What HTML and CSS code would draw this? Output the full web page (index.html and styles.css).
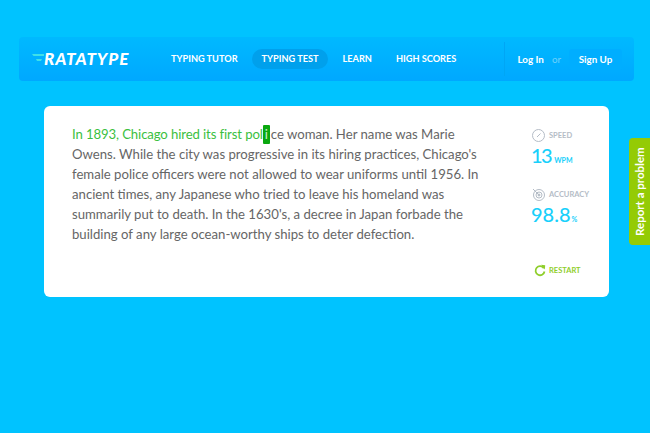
FILE: index.html
```html
<!DOCTYPE html>
<html lang="en">
<head>
<meta charset="utf-8">
<title>Ratatype typing test</title>
<link rel="stylesheet" href="styles.css">
</head>
<body>
<header class="nav">
  <a class="logo">
    <svg class="logo-lines" width="12" height="8" viewBox="0 0 12 8"><path d="M0 0h12v2H1.500zM4 5h6L9 7H5z" fill="#3fe0e8"/></svg>
    <span>RATATYPE</span>
  </a>
  <nav class="menu">
    <a class="item">TYPING TUTOR</a>
    <a class="item active">TYPING TEST</a>
    <a class="item">LEARN</a>
    <a class="item">HIGH SCORES</a>
  </nav>
  <div class="auth">
    <a class="login">Log In</a>
    <span class="or">or</span>
    <a class="signup">Sign Up</a>
  </div>
</header>
<main class="card">
  <div class="text">
    <div class="line"><span class="done">In 1893, Chicago hired its first pol</span><span class="cursor">i</span><span class="next">ce woman. Her name was Marie</span></div>
    <div>Owens. While the city was progressive in its hiring practices, Chicago's female police officers were not allowed to wear uniforms until 1956. In ancient times, any Japanese who tried to leave his homeland was summarily put to death. In the 1630's, a decree in Japan forbade the building of any large ocean-worthy ships to deter defection.</div>
  </div>
  <aside class="stats">
    <div class="stat">
      <div class="stat-label">
        <svg width="13" height="13" viewBox="0 0 13 13" fill="none" stroke="#b4bcc6"><circle cx="6.500" cy="6.500" r="6"/><path d="M5 8l3.500-3.500" /></svg>
        <span>SPEED</span>
      </div>
      <div class="stat-value"><span class="tight">13</span><small>WPM</small></div>
    </div>
    <div class="stat">
      <div class="stat-label">
        <svg width="13" height="13" viewBox="0 0 13 13" fill="none" stroke="#b4bcc6"><circle cx="7" cy="7" r="5.500"/><circle cx="7" cy="7" r="3"/><circle cx="7" cy="7" r="1" fill="#b4bcc6"/><path d="M1 1l6 6" /></svg>
        <span>ACCURACY</span>
      </div>
      <div class="stat-value">98.8<small class="pct">%</small></div>
    </div>
    <a class="restart">
      <svg width="12" height="13" viewBox="0 0 12 13" fill="none"><path d="M9.800 4.200A4.500 4.500 0 1 0 10.500 7.500" stroke="#8fce2b" stroke-width="1.800"/><path d="M7 .8l4.200.4-.3 4.300z" fill="#8fce2b"/></svg>
      <span>RESTART</span>
    </a>
  </aside>
</main>
<a class="report">Report a problem</a>
</body>
</html>
```
FILE: styles.css
```css
* { box-sizing: border-box; }
html, body { height: 100%; }
body {
  margin: 0;
  padding: 37px 16px 0 19px;
  background: #00c3ff;
  font-family: Lato, "Liberation Sans", sans-serif;
  overflow: hidden;
  position: relative;
}
.nav {
  height: 44px;
  border-radius: 4px;
  background: linear-gradient(#00b9ff, #00a8ff);
  display: flex;
  align-items: center;
  color: #fff;
  font-weight: 700;
}
.logo {
  display: flex;
  align-items: center;
  margin-left: 13px;
  width: 129px;
  flex: none;
}
.logo span {
  font-size: 17px;
  line-height: 18px;
  font-weight: 900;
  font-style: italic;
  letter-spacing: .9px;
  margin-top: -1px;
}
.logo-lines { margin-top: -3px; }
.menu {
  display: flex;
  align-items: center;
}
.item {
  font-size: 9.200px;
  line-height: 20px;
  padding: 0 10px;
  border-radius: 10px;
  margin-right: 4px;
  white-space: nowrap;
}
.item.active { background: #00a0ec; }
.auth {
  margin-left: auto;
  height: 34px;
  display: flex;
  align-items: center;
  padding-left: 13px;
  border-left: 1px solid #00a6f5;
  font-size: 9.800px;
}
.or { color: #6fd0fb; font-weight: 400; margin: 0 8px; }
.login { white-space: nowrap; }
.signup {
  display: block;
  width: 53px;
  line-height: 21px;
  text-align: center;
  border-radius: 3px;
  background: #00aeff;
  margin-right: 12px;
  white-space: nowrap;
}
.card {
  margin: 25px 0 0 25px;
  width: 565px;
  height: 191px;
  background: #fff;
  border-radius: 6px;
  display: flex;
  padding: 18px 0 0 28px;
}
.text {
  width: 420px;
  font-size: 13.170px;
  line-height: 20px;
  color: #666;
}
.line { white-space: nowrap; }
.done { color: #3bbf3f; letter-spacing: -.11px; }
.cursor {
  display: inline-block;
  line-height: 19px;
  width: 7px;
  text-align: center;
  background: #0aa80f;
  border-radius: 1px;
  color: #cfeed0;
}
.next { margin-left: 1px; }
.stats {
  margin: 3px 0 0 40px;
  display: flex;
  flex-direction: column;
  align-items: flex-start;
}
.stat { height: 59px; }
.stat-label {
  display: flex;
  align-items: center;
  gap: 4px;
  color: #b4bcc6;
  font-size: 7.500px;
  font-weight: 700;
  height: 16px;
}
.stat-value {
  color: #19d0fb;
  font-size: 20px;
  line-height: 24px;
  font-weight: 500;
  margin-left: -1px;
}
.tight { letter-spacing: -1.500px; }
.stat-value small { font-size: 7px; margin-left: 3px; font-weight: 700; }
.stat-value .pct { margin-left: 1px; }
.restart {
  display: flex;
  align-items: center;
  gap: 3px;
  margin: 19px 0 0 2px;
  color: #8fce2b;
  font-size: 7.500px;
  font-weight: 700;
}
.report {
  position: absolute;
  left: 629px;
  top: 138px;
  width: 22px;
  height: 107px;
  background: #94cb05;
  color: #fff;
  font-size: 11.500px;
  font-weight: 700;
  writing-mode: vertical-rl;
  transform: rotate(180deg);
  text-align: center;
  line-height: 22px;
  white-space: nowrap;
  border-radius: 0 4px 4px 0;
}
```
